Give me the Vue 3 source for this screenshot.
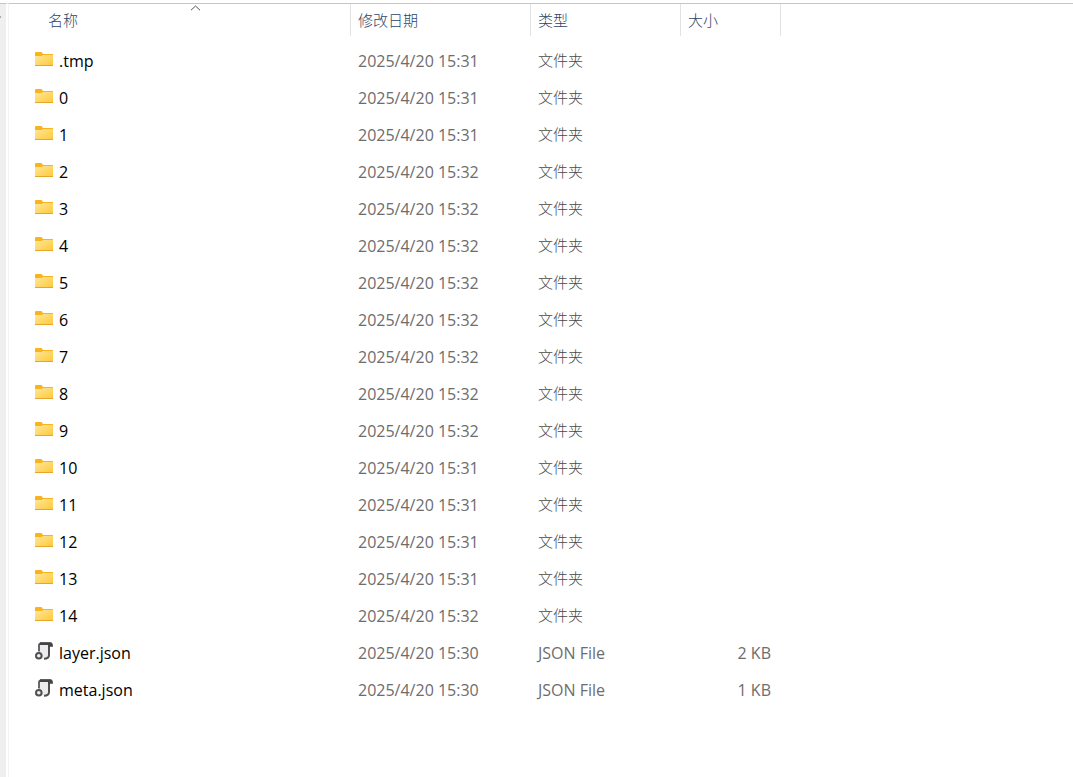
<script setup>
const folder = (name, time) => ({ name, date: `2025/4/20 ${time}`, type: '文件夹', size: '', kind: 'folder' })
const json = (name, size) => ({ name, date: '2025/4/20 15:30', type: 'JSON File', size, kind: 'json' })

const files = [
  folder('.tmp', '15:31'),
  folder('0', '15:31'),
  folder('1', '15:31'),
  folder('2', '15:32'),
  folder('3', '15:32'),
  folder('4', '15:32'),
  folder('5', '15:32'),
  folder('6', '15:32'),
  folder('7', '15:32'),
  folder('8', '15:32'),
  folder('9', '15:32'),
  folder('10', '15:31'),
  folder('11', '15:31'),
  folder('12', '15:31'),
  folder('13', '15:31'),
  folder('14', '15:32'),
  json('layer.json', '2 KB'),
  json('meta.json', '1 KB'),
]
</script>

<template>
  <div class="explorer">
    <div class="gutter"><span class="gutter-mark"></span></div>
    <main class="pane">
      <table class="files">
        <colgroup>
          <col class="col-name" />
          <col class="col-date" />
          <col class="col-type" />
          <col class="col-size" />
        </colgroup>
        <thead>
          <tr>
            <th scope="col" class="first" aria-sort="ascending">
              <button type="button">名称</button>
              <svg class="sort" width="11" height="6" viewBox="0 0 11 6" aria-hidden="true">
                <path d="M1 5.2 5.5 1 10 5.2" fill="none" stroke="#555" stroke-width="1" />
              </svg>
            </th>
            <th scope="col"><button type="button">修改日期</button></th>
            <th scope="col"><button type="button">类型</button></th>
            <th scope="col"><button type="button">大小</button></th>
          </tr>
        </thead>
        <tbody>
          <tr v-for="file in files" :key="file.name">
            <td class="name">
              <div class="entry">
                <svg v-if="file.kind === 'folder'" width="18" height="18" viewBox="0 0 18 18" aria-hidden="true">
                  <defs>
                    <linearGradient id="folder-front" x1="0" y1="0" x2="1" y2="1">
                      <stop offset="0" stop-color="#ffe69b" />
                      <stop offset="1" stop-color="#fec937" />
                    </linearGradient>
                  </defs>
                  <path d="M0 3Q0 2 1 2H6.5L8 4H17.5Q18 4 18 4.6V8H0Z" fill="#f9b31b" />
                  <path d="M0 6H6.5L8 5H18V15.5Q18 16 17.5 16H.5Q0 16 0 15.5Z" fill="url(#folder-front)" />
                  <path d="M0 15H18V15.5Q18 16 17.5 16H.5Q0 16 0 15.5Z" fill="#e5a62b" />
                </svg>
                <svg v-else width="18" height="18" viewBox="0 0 18 18" aria-hidden="true">
                  <path d="M4 1.5H14V13.5Q14 16.5 11 16.5H6L4 11Z" fill="#ececee" />
                  <path d="M4 9.5V3.5Q4 1.3 6 1.3H15.5" fill="none" stroke="#58585a" stroke-width="1.8" />
                  <path d="M14 3V13Q14 16.8 9 16.8" fill="none" stroke="#505052" stroke-width="2" />
                  <path d="M5 .3H15.5Q18 .3 18 4.8H13V3H5Z" fill="#454547" />
                  <circle cx="3.8" cy="13.8" r="2.8" fill="#eee" stroke="#505052" stroke-width="2" />
                </svg>
                <span>{{ file.name }}</span>
              </div>
            </td>
            <td>{{ file.date }}</td>
            <td :class="{ kind: file.kind === 'folder' }">{{ file.type }}</td>
            <td class="size">{{ file.size }}</td>
          </tr>
        </tbody>
      </table>
    </main>
  </div>
</template>

<style>
body {
  margin: 0;
  background: #fff;
}
</style>

<style scoped>
.explorer {
  box-sizing: border-box;
  display: flex;
  min-height: 100vh;
  padding-top: 3px;
  background: #fff;
  font-family: "Open Sans", "Noto Sans CJK SC", sans-serif;
  font-size: 16px;
  color: #6d6d6d;
}
.gutter {
  flex: none;
  width: 6px;
  background: #efefef;
  border-top: 1px solid #a6d3d1;
  border-right: 2px solid #fff;
}
.gutter-mark {
  display: block;
  width: 1px;
  height: 2px;
  margin-top: 12px;
  background: #aaa;
}
.pane {
  flex: 1;
  min-width: 0;
  border-top: 1px solid #a6d3d1;
  border-left: 1px solid #f3f3f3;
}
.files {
  table-layout: fixed;
  width: 772px;
  border-collapse: separate;
  border-spacing: 0;
}
.col-name { width: 342px; }
.col-date { width: 180px; }
.col-type { width: 150px; }
.col-size { width: 100px; }
th {
  position: relative;
  height: 32px;
  padding: 0 0 0 7px;
  border-right: 1px solid #e2e2e2;
  text-align: left;
  font-weight: 400;
}
th.first {
  padding-left: 39px;
}
th button {
  display: block;
  width: 100%;
  height: 32px;
  padding: 0;
  border: 0;
  background: none;
  color: #2c4468;
  font: 300 15px/32px "Noto Sans CJK SC", sans-serif;
  text-align: left;
}
.sort {
  position: absolute;
  top: 1px;
  left: 181px;
}
tbody::before {
  content: "";
  display: table-row;
  height: 6px;
}
td {
  box-sizing: border-box;
  height: 37px;
  padding: 2px 0 0 7px;
  line-height: 35px;
  white-space: nowrap;
}
td.name {
  padding-left: 26px;
  color: #000;
}
.entry {
  display: flex;
  align-items: center;
  gap: 6px;
}
.entry svg {
  flex: none;
  margin-bottom: 6px;
}
td.kind {
  padding-top: 0;
  padding-bottom: 2px;
  color: #484848;
  font: 300 15px/35px "Noto Sans CJK SC", sans-serif;
}
td.size {
  padding-right: 10px;
  text-align: right;
}
</style>
